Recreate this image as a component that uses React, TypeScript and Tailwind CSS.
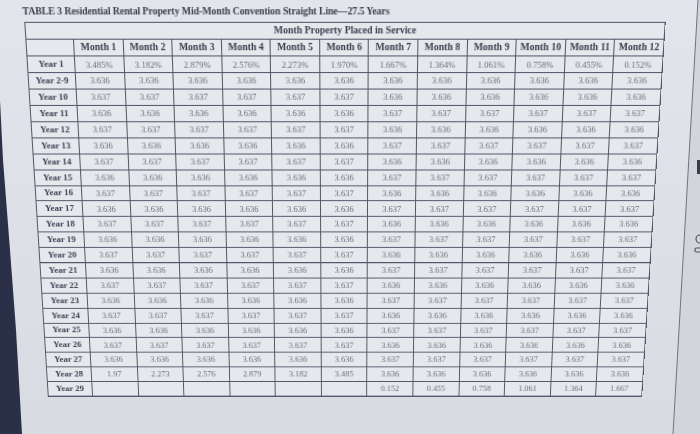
import React from "react";

const header1 = ["3.485%", "3.182%", "2.879%", "2.576%", "2.273%", "1.970%", "1.667%", "1.364%", "1.061%", "0.758%", "0.455%", "0.152%"];

type Row = { label: string; cells: string[] };

function buildRows(): Row[] {
  const rows: Row[] = [];
  rows.push({ label: "Year 1", cells: header1 });
  rows.push({ label: "Year 2-9", cells: Array(12).fill("3.636") });
  for (let y = 10; y <= 27; y++) {
    const even = y % 2 === 0;
    const a = even ? "3.637" : "3.636";
    const b = even ? "3.636" : "3.637";
    rows.push({ label: `Year ${y}`, cells: [...Array(6).fill(a), ...Array(6).fill(b)] });
  }
  rows.push({ label: "Year 28", cells: ["1.97", "2.273", "2.576", "2.879", "3.182", "3.485", ...Array(6).fill("3.636")] });
  rows.push({ label: "Year 29", cells: ["", "", "", "", "", "", "0.152", "0.455", "0.758", "1.061", "1.364", "1.667"] });
  return rows;
}

const rows = buildRows();
const months = Array.from({ length: 12 }, (_, i) => `Month ${i + 1}`);

export default function App() {
  return (
    <div className="relative w-[700px] h-[434px] overflow-hidden bg-gradient-to-b from-[#e3e5ec] to-[#d9dbe2] [font-family:'Liberation_Serif',serif]">
      <svg className="absolute inset-0" width="700" height="434" viewBox="0 0 700 434">
        <polygon points="698,0 700,0 700,434 673,434" fill="#d3d5dc" />
        <line x1="698" y1="0" x2="673" y2="434" stroke="#6f7280" strokeWidth="1" />
        <polygon points="0,100 3,160 10,250 16,330 22,434 0,434" fill="#2b3049" />
        <rect x="697" y="160" width="3" height="14" fill="#3b3e48" />
        <path d="M700 235 a4 4 0 0 0 -4 4 a4 4 0 0 0 4 4" fill="none" stroke="#555" strokeWidth="1.2" />
        <rect x="695" y="248" width="8" height="4" rx="1.5" fill="none" stroke="#555" strokeWidth="1.2" />
      </svg>
      <div className="relative ml-[36px] mt-[9px] w-[618px] origin-[50%_50%] [transform:perspective(1000px)_rotateX(-11.5deg)]">
        <div className="ml-[-1px] h-[16px] text-[9.5px] font-bold text-[#3a3e4c] leading-[12px] tracking-[-0.1px] whitespace-nowrap">
          TABLE 3 Residential Rental Property Mid-Month Convention Straight Line—27.5 Years
        </div>
        <table className="w-[618px] table-fixed border-collapse border-[1.5px] border-[#525769] bg-[#e7e8ee]">
          <colgroup>
            <col className="w-[46px]" />
            {months.map((m) => (
              <col key={m} />
            ))}
          </colgroup>
          <tbody>
            <tr className="h-[16.2px]">
              <td colSpan={13} className="border border-[#525769] text-center text-[9.5px] font-bold text-[#3a3e4c] leading-none">
                Month Property Placed in Service
              </td>
            </tr>
            <tr className="h-[16.2px]">
              <td className="border border-[#525769]" />
              {months.map((m) => (
                <td key={m} className="border border-[#525769] text-center text-[9.5px] font-bold text-[#3a3e4c] leading-none whitespace-nowrap">
                  {m}
                </td>
              ))}
            </tr>
            {rows.map((r) => (
              <tr key={r.label} className="h-[15.9px]">
                <td className="border border-[#525769] text-center text-[9px] font-bold text-[#3d4252] leading-none whitespace-nowrap">
                  {r.label}
                </td>
                {r.cells.map((c, i) => (
                  <td key={i} className="border border-[#525769] text-center text-[8.5px] text-[#6a6d78] leading-none whitespace-nowrap">
                    {c}
                  </td>
                ))}
              </tr>
            ))}
          </tbody>
        </table>
      </div>
    </div>
  );
}
